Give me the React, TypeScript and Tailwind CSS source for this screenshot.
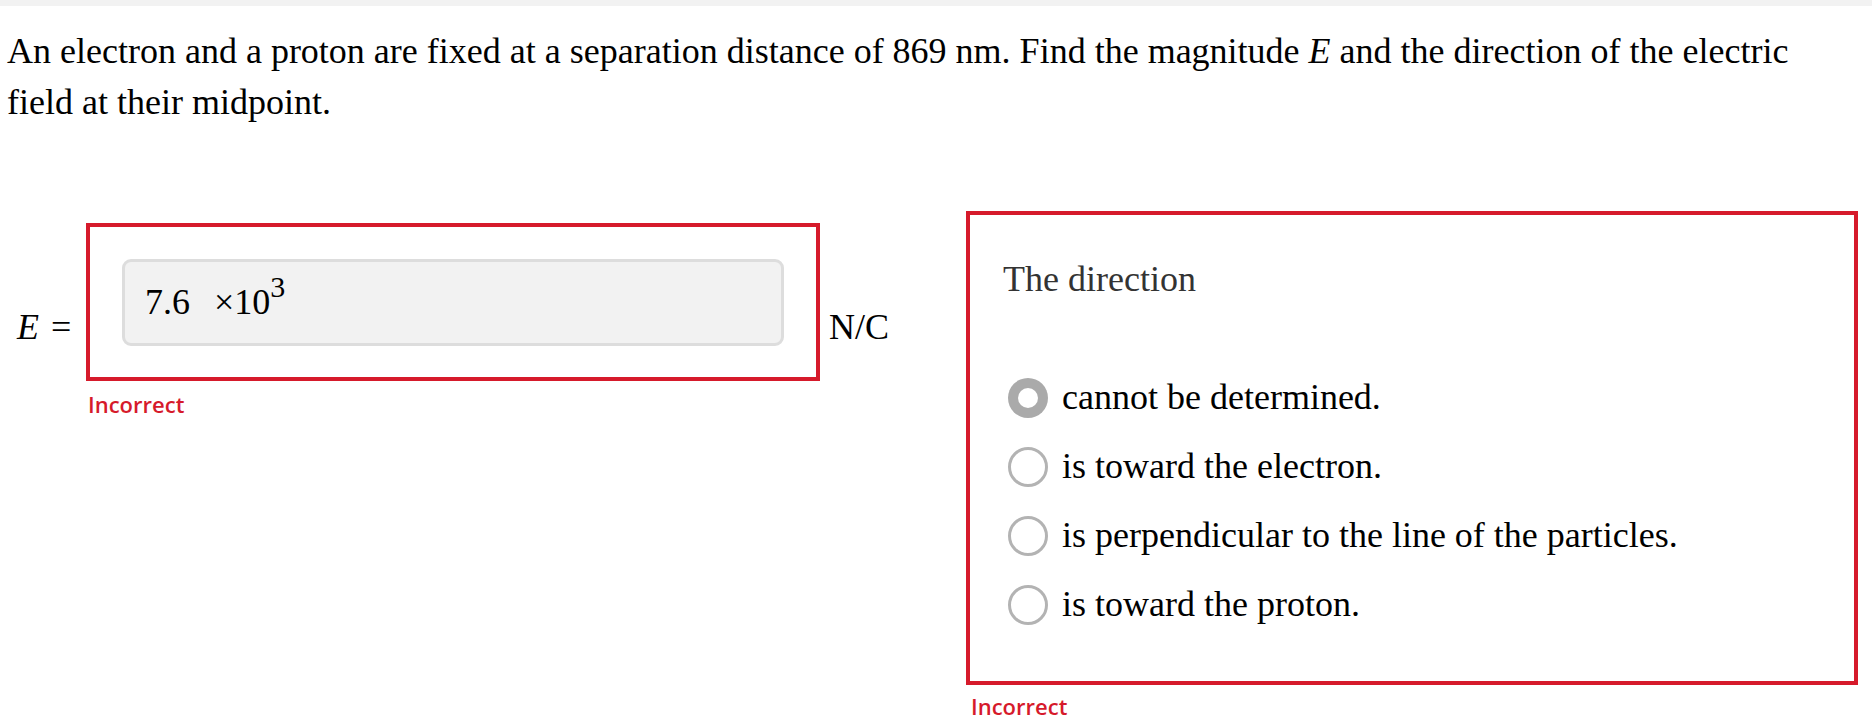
import React, { useState } from 'react';

const OPTIONS = [
  'cannot be determined.',
  'is toward the electron.',
  'is perpendicular to the line of the particles.',
  'is toward the proton.',
];

function Radio({ checked }: { checked: boolean }) {
  return checked ? (
    <span className="flex h-[40px] w-[40px] shrink-0 items-center justify-center rounded-full bg-[#aaaaaa]">
      <span className="block h-[20px] w-[20px] rounded-full bg-white" />
    </span>
  ) : (
    <span className="block h-[40px] w-[40px] shrink-0 rounded-full border-[3px] border-[#b3b3b3] bg-white" />
  );
}

export default function App() {
  const [selected, setSelected] = useState(0);

  return (
    <div className="min-h-screen bg-white text-black font-['Liberation_Serif','Times_New_Roman',serif]">
      <div className="h-[6px] bg-[#f2f2f2]" />
      <div className="pl-[7px] pr-[14px]">
        <p className="mt-[20px] text-[36px] leading-[51px]">
          An electron and a proton are fixed at a separation distance of 869 nm. Find the magnitude <i>E</i> and
          the direction of the electric field at their midpoint.
        </p>

        <div className="mt-[83px] flex">
          {/* magnitude answer */}
          <div className="w-[959px] shrink-0 pt-[12px]">
            <div className="flex items-start">
              <div className="ml-[10px] mt-[79px] flex w-[69px] text-[36px] leading-[51px]">
                <i>E</i>
                <span className="ml-[12px]">=</span>
              </div>
              <div className="border-[4px] border-[#d61a2b] px-[32px] pt-[32px] pb-[31px]">
                <div className="flex h-[87px] w-[662px] items-center rounded-[9px] border-[3px] border-[#dddddd] bg-[#f2f2f2] pl-[20px] text-[36px] leading-[51px]">
                  <span>7.6</span>
                  <span className="ml-[24px]">×10</span>
                  <span className="relative -top-[16px] text-[30px] leading-none">3</span>
                </div>
              </div>
              <div className="ml-[9px] mt-[79px] text-[36px] leading-[51px]">N/C</div>
            </div>
            <div className="ml-[81px] mt-[7px] font-['Open_Sans',sans-serif] text-[22px] font-semibold text-[#d61a2b]">
              Incorrect
            </div>
          </div>

          {/* direction answer */}
          <div className="flex-1">
            <div className="border-[4px] border-[#d61a2b] pl-[33px] pt-[39px] pb-[42px]">
              <div className="text-[36px] leading-[51px] text-[#333333]">The direction</div>
              <div className="mt-[58px] flex flex-col">
                {OPTIONS.map((opt, i) => (
                  <label
                    key={opt}
                    onClick={() => setSelected(i)}
                    className="flex h-[69px] cursor-pointer items-center"
                  >
                    <span className="ml-[5px] flex">
                      <Radio checked={selected === i} />
                    </span>
                    <span className="ml-[14px] text-[36px] leading-[51px]">{opt}</span>
                  </label>
                ))}
              </div>
            </div>
            <div className="ml-[5px] mt-[5px] font-['Open_Sans',sans-serif] text-[22px] font-semibold text-[#d61a2b]">
              Incorrect
            </div>
          </div>
        </div>
      </div>
    </div>
  );
}
